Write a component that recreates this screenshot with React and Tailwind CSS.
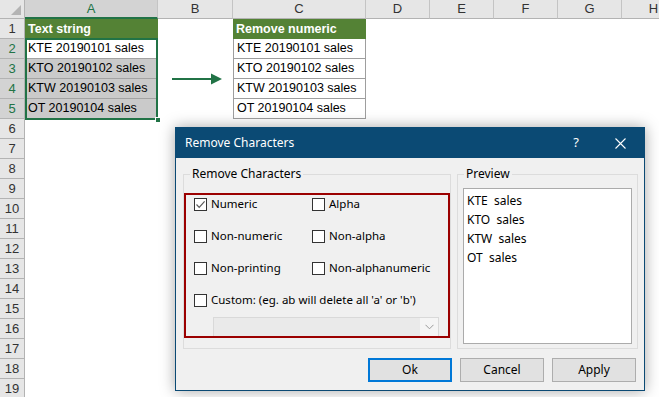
import React from 'react';

const sheetFont = { fontFamily: '"Liberation Sans", Arial, sans-serif' };
const uiFont = { fontFamily: '"Noto Sans", "Open Sans", sans-serif' };

const columns = [
  { label: 'A', cls: 'w-[133px]', selected: true },
  { label: 'B', cls: 'w-[75px]' },
  { label: 'C', cls: 'w-[133px]' },
  { label: 'D', cls: 'w-[64px]' },
  { label: 'E', cls: 'w-[64px]' },
  { label: 'F', cls: 'w-[64px]' },
  { label: 'G', cls: 'w-[64px]' },
  { label: 'H', cls: 'w-[64px]' },
];

const source = ['KTE 20190101 sales', 'KTO 20190102 sales', 'KTW 20190103 sales', 'OT 20190104 sales'];
const preview = ['KTE  sales', 'KTO  sales', 'KTW  sales', 'OT  sales'];
const rows = Array.from({ length: 19 }, (_, i) => i + 1);

const Checkbox = ({ checked, label }) => (
  <label className="flex h-[18px] items-center gap-[4px] text-[11.5px]">
    <span className="flex h-[13px] w-[13px] shrink-0 items-center justify-center border border-[#333] bg-white">
      {checked && (
        <svg width="11" height="11" viewBox="0 0 11 11">
          <path d="M1.5 5.5 L4.2 8.3 L9.6 2.4" fill="none" stroke="#5a5a5a" strokeWidth="1.2" />
        </svg>
      )}
    </span>
    <span>{label}</span>
  </label>
);

const Button = ({ children, primary }) => (
  <button
    className={`flex h-[24px] w-[84px] items-center justify-center bg-[#e1e1e1] text-[12px] text-black ${
      primary ? 'border-2 border-[#0078d7]' : 'border border-[#adadad]'
    }`}
  >
    {children}
  </button>
);

const RemoveCharactersDialog = () => (
  <div
    className="absolute left-[175px] top-[127px] flex h-[264px] w-[470px] flex-col border border-[#0b4a74] bg-[#f0f0f0] text-[12px] text-black shadow-[0_0_14px_rgba(0,0,0,0.35)]"
    style={uiFont}
  >
    <div className="flex h-[30px] shrink-0 items-center bg-[#0b4a74] pl-[9px] text-white">
      <span className="flex-1">Remove Characters</span>
      <span className="mr-[36px] text-[13px]">?</span>
      <svg width="11" height="11" viewBox="0 0 11 11" className="mr-[18px]">
        <path d="M0.5 0.5 L10.5 10.5 M10.5 0.5 L0.5 10.5" stroke="white" strokeWidth="1.1" />
      </svg>
    </div>

    <div className="flex gap-[6px] pl-[7px] pt-[8px]">
      <fieldset className="h-[183px] w-[268px] border border-[#dcdcdc]">
        <legend className="ml-[6px] px-[2px] leading-[16px] text-[#000]">Remove Characters</legend>
        <div className="mt-[11px] border-2 border-[#9b0000] pl-[8px]">
          <div className="grid grid-cols-[118px_1fr] gap-y-[14px]">
            <Checkbox checked label="Numeric" />
            <Checkbox label="Alpha" />
            <Checkbox label="Non-numeric" />
            <Checkbox label="Non-alpha" />
            <Checkbox label="Non-printing" />
            <Checkbox label="Non-alphanumeric" />
            <div className="col-span-2">
              <Checkbox label="Custom: (eg. ab will delete all 'a' or 'b')" />
            </div>
          </div>
          <div className="ml-[19px] mt-[8px] flex h-[19px] w-[226px] items-center justify-end border border-b-0 border-[#d9d9d9] bg-[#eaeaea]">
            <div className="flex h-full w-[18px] items-center justify-center bg-[#f5f5f5]">
              <svg width="9" height="6" viewBox="0 0 9 6">
                <path d="M0.5 0.8 L4.5 4.8 L8.5 0.8" fill="none" stroke="#9a9a9a" strokeWidth="1" />
              </svg>
            </div>
          </div>
        </div>
      </fieldset>

      <fieldset className="h-[183px] w-[181px] border border-[#dcdcdc] px-[5px]">
        <legend className="ml-[1px] px-[2px] leading-[16px]">Preview</legend>
        <div className="mt-[6px] h-[156px] border border-[#ababab] bg-white pl-[3px] pt-[2px]">
          {preview.map((line) => (
            <div key={line} className="whitespace-pre leading-[19px]">
              {line}
            </div>
          ))}
        </div>
      </fieldset>
    </div>

    <div className="mt-[9px] flex justify-end gap-[8px] pr-[8px]">
      <Button primary>Ok</Button>
      <Button>Cancel</Button>
      <Button>Apply</Button>
    </div>
  </div>
);

export default function App() {
  return (
    <div className="relative h-[397px] w-[659px] overflow-hidden bg-white text-black" style={sheetFont}>
      {/* column headers */}
      <div className="flex h-[19px] bg-[#e6e6e6] text-[13px] text-[#333]">
        <div className="relative w-[25px] shrink-0 border-b border-r border-[#b3b3b3]">
          <svg width="10" height="10" viewBox="0 0 10 10" className="absolute bottom-[3px] right-[3px]">
            <path d="M10 0 L10 10 L0 10 Z" fill="#b4b4b4" />
          </svg>
        </div>
        {columns.map((c) => (
          <div
            key={c.label}
            className={`${c.cls} flex shrink-0 items-center justify-center border-r border-[#c4c4c4] ${
              c.selected ? 'border-b-2 border-b-[#217346] bg-[#d3d3d3] text-[#217346]' : 'border-b border-b-[#b3b3b3]'
            }`}
          >
            {c.label}
          </div>
        ))}
      </div>

      {rows.map((r) => {
        const selected = r >= 2 && r <= 5;
        return (
          <div key={r} className="flex h-[20px] text-[12.5px]">
            <div
              className={`flex w-[25px] shrink-0 items-center justify-center border-b border-r border-[#b3b3b3] text-[13px] ${
                selected ? 'bg-[#d3d3d3] text-[#217346]' : 'bg-[#e6e6e6] text-[#333]'
              }`}
            >
              {r}
            </div>
            {r === 1 && (
              <>
                <div className="flex w-[133px] shrink-0 items-center bg-[#548235] pl-[3px] font-bold text-white">Text string</div>
                <div className="w-[75px] shrink-0" />
                <div className="flex w-[133px] shrink-0 items-center bg-[#548235] pl-[3px] font-bold text-white">Remove numeric</div>
              </>
            )}
            {selected && (
              <>
                <div
                  className={`flex w-[133px] shrink-0 items-center border-b border-[#a3a3a3] pl-[3px] ${
                    r === 2 ? 'bg-white' : 'bg-[#cacaca]'
                  }`}
                >
                  {source[r - 2]}
                </div>
                <div className="w-[75px] shrink-0" />
                <div className="flex w-[133px] shrink-0 items-center border-x border-b border-[#9e9e9e] pl-[3px]">
                  {source[r - 2]}
                </div>
              </>
            )}
          </div>
        );
      })}

      {/* selection outline and fill handle */}
      <div className="absolute left-[25px] top-[38px] h-[82px] w-[133px] border-2 border-[#217346]" />
      <div className="absolute left-[155px] top-[117px] h-[6px] w-[6px] border border-white bg-[#217346]" />

      {/* arrow */}
      <svg width="54" height="14" viewBox="0 0 54 14" className="absolute left-[171px] top-[72px]">
        <path d="M1 7 L42 7" stroke="#217346" strokeWidth="2.2" />
        <path d="M40 1.5 L51 7 L40 12.5 Z" fill="#217346" />
      </svg>

      <RemoveCharactersDialog />
    </div>
  );
}
